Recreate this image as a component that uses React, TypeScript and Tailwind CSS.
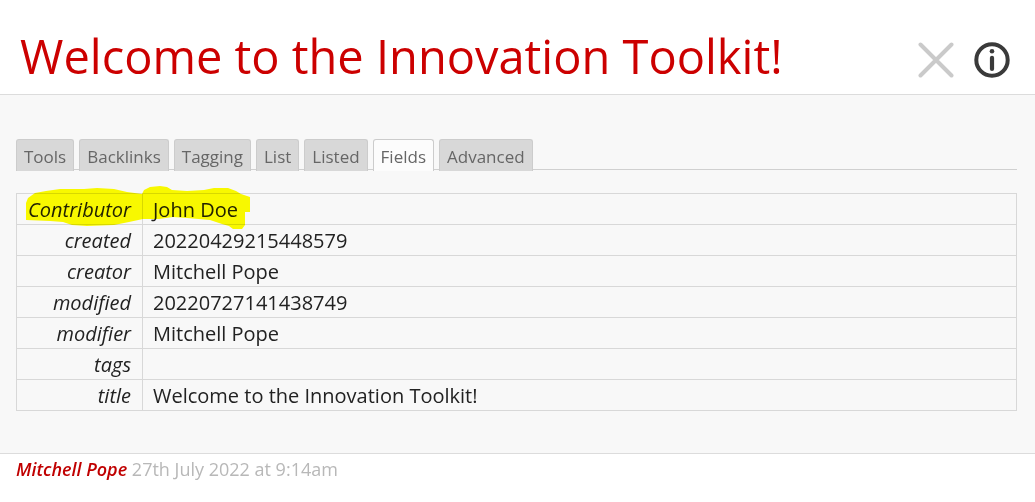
import { useState } from 'react';

const tabs = ['Tools', 'Backlinks', 'Tagging', 'List', 'Listed', 'Fields', 'Advanced'];

const fields = [
  { name: 'Contributor', value: 'John Doe' },
  { name: 'created', value: '20220429215448579' },
  { name: 'creator', value: 'Mitchell Pope' },
  { name: 'modified', value: '20220727141438749' },
  { name: 'modifier', value: 'Mitchell Pope' },
  { name: 'tags', value: '' },
  { name: 'title', value: 'Welcome to the Innovation Toolkit!' },
];

const CloseIcon = () => (
  <svg viewBox="0 0 36 36" className="w-9 h-9" fill="none" stroke="#cacaca" strokeWidth="4" strokeLinecap="round">
    <path d="M2.500 2.500L33.500 33.500M33.500 2.500L2.500 33.500" />
  </svg>
);

const InfoIcon = () => (
  <svg viewBox="0 0 36 36" className="w-9 h-9">
    <circle cx="18" cy="18" r="15.700" fill="none" stroke="#3a3a3a" strokeWidth="4" />
    <circle cx="18" cy="9.300" r="2.300" fill="#3a3a3a" />
    <path d="M18 15.800V27" stroke="#3a3a3a" strokeWidth="4.200" strokeLinecap="round" />
  </svg>
);

// Marker stroke drawn over the first row of the table
const Highlight = () => (
  <svg
    viewBox="0 0 228 46"
    className="absolute left-2 -top-[9px] w-[228px] h-[46px] mix-blend-multiply pointer-events-none"
    aria-hidden="true"
  >
    <path
      fill="#ffff00"
      d="M2 19L4 14L11 9L22 7L36 5L60 5L73 4L90 5L103 8L118 10L120 6L126 3L136 2L143 3L148 6L163 7L180 6L190 4L204 4L212 7L217 10L226 13V28H221V41L218 45H209L205 42L198 40L186 36L163 34L149 33L135 35H119L105 38L90 41L63 42L48 41L39 38L26 37L2 36Z"
    />
  </svg>
);

const App = () => {
  const [active, setActive] = useState('Fields');

  return (
    <div className="bg-white text-[#222222] font-['Open_Sans','Noto_Sans',sans-serif]">
      <header className="flex items-start justify-between h-[95px] pl-5 pr-[25px] border-b border-[#dcdcdc]">
        <h1 className="mt-6 text-[47px] leading-[64px] font-normal text-[#cc0000] whitespace-nowrap">
          Welcome to the Innovation Toolkit!
        </h1>
        <div className="flex gap-5 mt-[42px]">
          <button type="button" aria-label="close">
            <CloseIcon />
          </button>
          <button type="button" aria-label="info">
            <InfoIcon />
          </button>
        </div>
      </header>

      <main className="bg-[#f8f8f8] border-b border-[#dcdcdc] pl-4 pr-[18px] pt-11 pb-[42px]">
        <div role="tablist" className="flex gap-[5px] border-b border-[#d0d0d0]">
          {tabs.map((tab) => (
            <button
              key={tab}
              type="button"
              role="tab"
              aria-selected={tab === active}
              onClick={() => setActive(tab)}
              className={`-mb-0.5 h-8 px-[7px] pt-0.5 rounded-t-[3px] border border-b-0 border-[#cccccc] text-[17px] leading-6 text-[#666666] ${
                tab === active ? 'bg-[#fcfcfc]' : 'bg-[#d8d8d8]'
              }`}
            >
              {tab}
            </button>
          ))}
        </div>

        <div className="relative mt-[23px]">
          <table className="w-full border-collapse text-[20px] leading-7">
            <tbody>
              {fields.map((field) => (
                <tr key={field.name} className="h-[31px]">
                  <th scope="row" className="w-[126px] p-0 pt-0.5 pr-[11px] border border-[#d8d8d8] text-right font-normal italic">
                    {field.name}
                  </th>
                  <td className="p-0 pt-0.5 pl-2.5 border border-[#d8d8d8]">{field.value}</td>
                </tr>
              ))}
            </tbody>
          </table>
          <Highlight />
        </div>
      </main>

      <footer className="px-4 pt-[3px] text-[18px] leading-6 text-[#b8b8b8]">
        <a href="#mitchell-pope" className="font-semibold italic text-[#c00000]">
          Mitchell Pope
        </a>{' '}
        27th July 2022 at 9:14am
      </footer>
    </div>
  );
};

export default App;
